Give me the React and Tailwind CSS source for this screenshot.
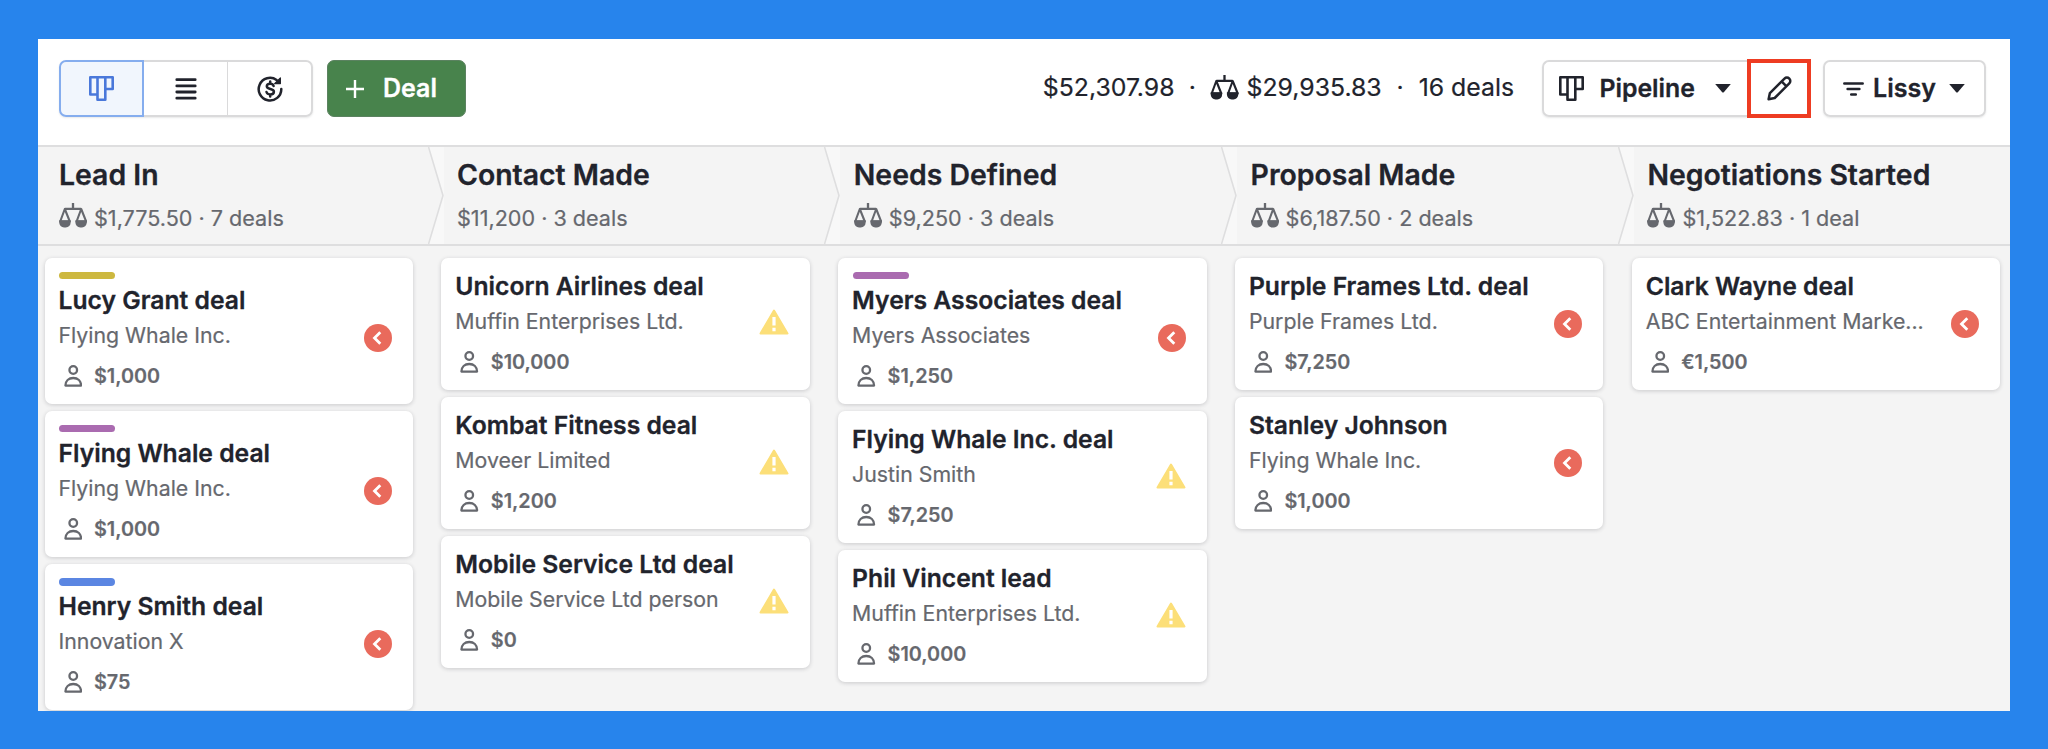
const stages = [
  {
    name: "Lead In",
    weighted: true,
    summary: "$1,775.50 · 7 deals",
    deals: [
      { title: "Lucy Grant deal", org: "Flying Whale Inc.", value: "$1,000", label: "bg-[#cdb83f]", status: "overdue" },
      { title: "Flying Whale deal", org: "Flying Whale Inc.", value: "$1,000", label: "bg-[#aa6bb0]", status: "overdue" },
      { title: "Henry Smith deal", org: "Innovation X", value: "$75", label: "bg-[#5b86e2]", status: "overdue" },
    ],
  },
  {
    name: "Contact Made",
    summary: "$11,200 · 3 deals",
    deals: [
      { title: "Unicorn Airlines deal", org: "Muffin Enterprises Ltd.", value: "$10,000", status: "warning" },
      { title: "Kombat Fitness deal", org: "Moveer Limited", value: "$1,200", status: "warning" },
      { title: "Mobile Service Ltd deal", org: "Mobile Service Ltd person", value: "$0", status: "warning" },
    ],
  },
  {
    name: "Needs Defined",
    weighted: true,
    summary: "$9,250 · 3 deals",
    deals: [
      { title: "Myers Associates deal", org: "Myers Associates", value: "$1,250", label: "bg-[#aa6bb0]", status: "overdue" },
      { title: "Flying Whale Inc. deal", org: "Justin Smith", value: "$7,250", status: "warning" },
      { title: "Phil Vincent lead", org: "Muffin Enterprises Ltd.", value: "$10,000", status: "warning" },
    ],
  },
  {
    name: "Proposal Made",
    weighted: true,
    summary: "$6,187.50 · 2 deals",
    deals: [
      { title: "Purple Frames Ltd. deal", org: "Purple Frames Ltd.", value: "$7,250", status: "overdue" },
      { title: "Stanley Johnson", org: "Flying Whale Inc.", value: "$1,000", status: "overdue" },
    ],
  },
  {
    name: "Negotiations Started",
    weighted: true,
    summary: "$1,522.83 · 1 deal",
    deals: [
      { title: "Clark Wayne deal", org: "ABC Entertainment Marke...", value: "€1,500", status: "overdue" },
    ],
  },
]

const BoardIcon = () => (
  <svg className="size-[25px] shrink-0" viewBox="0 0 25 25" fill="none" stroke="currentColor" strokeWidth="2.6" strokeLinejoin="round">
    <path d="M8.5 1.3H1.3v17.2h7.2M16.3 13h7.4V1.3h-7.4M8.5 1.3h7.8V23.7H8.5z" />
  </svg>
)

const ListIcon = () => (
  <svg className="w-[22px] h-[24px]" viewBox="0 0 22 24" stroke="currentColor" strokeWidth="2.8" strokeLinecap="round">
    <path d="M1.8 2.7h18.4M1.8 8.9h18.4M1.8 15h18.4M1.8 21.2h18.4" />
  </svg>
)

const ForecastIcon = () => (
  <svg className="size-[26px]" viewBox="0 0 26 26" fill="none" stroke="currentColor" strokeWidth="2.5" strokeLinecap="round">
    <path d="M24.3 13A11.3 11.3 0 1 1 19.6 4" />
    <path d="M23.4 2v5.6h-5.8z" fill="currentColor" strokeWidth="1.2" strokeLinejoin="round" />
    <path d="M16.6 10c-.4-1.5-1.7-2.3-3.4-2.3-2 0-3.4 1-3.4 2.6 0 3.7 7.1 1.7 7.1 5.4 0 1.7-1.5 2.7-3.6 2.7-1.9 0-3.3-.8-3.8-2.4M13.2 5.6v2M13.2 18.6v2" />
  </svg>
)

const ScalesIcon = ({ className }) => (
  <svg className={className} viewBox="0 0 28 25" fill="none" stroke="currentColor" strokeWidth="2.3" strokeLinejoin="round">
    <path d="M14 0v6.2M5.8 5.8h16.4" />
    <path d="M5.8 6 1.2 18.5h9.6zM22.2 6l-4.6 12.5h9.6z" strokeWidth="2.1" />
    <path d="M.2 17.2h11.4v2.2A4.8 4.8 0 0 1 6.8 24.4H5A4.8 4.8 0 0 1 .2 19.6zM16.4 17.2h11.4v2.4a4.8 4.8 0 0 1-4.8 4.8h-1.8a4.8 4.8 0 0 1-4.8-4.8z" fill="currentColor" stroke="none" />
  </svg>
)

const PersonIcon = () => (
  <svg className="w-[18.5px] h-[22px]" viewBox="0 0 18 22" fill="none" stroke="currentColor" strokeWidth="2.3">
    <circle cx="9" cy="5" r="3.8" />
    <path d="M1.2 20.6c0-4.6 3.3-7.6 7.8-7.6s7.8 3 7.8 7.6z" strokeLinejoin="round" />
  </svg>
)

const PencilIcon = () => (
  <svg className="size-[25px]" viewBox="0 0 25 25" fill="none" stroke="currentColor" strokeWidth="2.5" strokeLinejoin="round">
    <path d="M1.6 23.3l1.3-6.2L17.5 2.6a3.3 3.3 0 0 1 4.8 4.8L7.7 22zM14.6 5.4l4.9 4.9" />
  </svg>
)

const FilterIcon = () => (
  <svg className="w-[21px] h-[14px]" viewBox="0 0 21 14" stroke="currentColor" strokeWidth="2.5" strokeLinecap="round">
    <path d="M1.3 1.5h18.4M4.6 7h11.8M8.2 12.5h4.6" />
  </svg>
)

const Caret = () => (
  <svg className="w-[16px] h-[9px]" viewBox="0 0 16 9" fill="currentColor">
    <path d="M.2 0h15.6L8.8 8.2a1.1 1.1 0 0 1-1.6 0z" />
  </svg>
)

function Status({ type }) {
  if (type === "warning") {
    return (
      <svg className="w-[30px] h-[26px] -mt-[3px]" viewBox="0 0 30 26">
        <path d="M15 1.5 28.5 24.5h-27z" fill="#fcdf79" stroke="#fcdf79" strokeWidth="2" strokeLinejoin="round" />
        <path d="M15 8v8.5M15 18.7v3.6" stroke="#fff" strokeWidth="3.2" />
      </svg>
    )
  }
  return (
    <svg className="size-7" viewBox="0 0 28 28">
      <circle cx="14" cy="14" r="14" fill="#e96a5c" />
      <path d="m16.3 8.2-5.8 5.8 5.8 5.8" fill="none" stroke="#fff" strokeWidth="2.8" />
    </svg>
  )
}

function StageHeader({ stage, first }) {
  return (
    <div className={first ? "flex shrink-0 w-[389.5px] pl-[21px]" : "flex shrink-0 w-[396.8px]"}>
      {!first && (
        <svg className="w-4 h-full mr-[13.5px] shrink-0" viewBox="0 0 16 98" preserveAspectRatio="none">
          <path d="M0 0h16v98H0l15-49z" fill="#f8f8f8" />
          <path d="M.5 0 15 49 .5 98" fill="none" stroke="#dededf" strokeWidth="1.6" />
        </svg>
      )}
      <div className="pt-[10px] whitespace-nowrap">
        <h2 className="text-[28.4px] leading-9 font-semibold [-webkit-text-stroke:0.3px]">{stage.name}</h2>
        <div className="flex items-center mt-[11px] text-[21.6px] leading-7 text-[#66686e] [-webkit-text-stroke:0.2px]">
          {stage.weighted && <ScalesIcon className="w-7 h-[25px] mr-[7px] -mt-[5px]" />}
          {stage.summary}
        </div>
      </div>
    </div>
  )
}

function DealCard({ deal }) {
  return (
    <div className="w-[368.5px] shrink-0 rounded-[7px] bg-white shadow-[0_1px_4px_rgba(33,35,44,0.2)]">
      {deal.label && (
        <div className="h-3.5 pt-3.5 pl-[14.5px]">
          <div className={`w-14 h-[7.5px] rounded-full ${deal.label}`} />
        </div>
      )}
      <div className="flex items-center justify-between h-[132.3px] pl-[14px] pr-[21px]">
        <div className="h-full pt-[13px] whitespace-nowrap">
          <h3 className="text-[24.7px] leading-[30px] font-semibold [-webkit-text-stroke:0.3px]">{deal.title}</h3>
          <p className="mt-[5px] text-[21.3px] leading-[30px] text-[#66686e] [-webkit-text-stroke:0.2px]">{deal.org}</p>
          <div className="flex items-center mt-[14px] pl-[5px] gap-[12px] text-[19.8px] leading-6 font-semibold text-[#66686e] [-webkit-text-stroke:0.2px]">
            <PersonIcon />
            {deal.value}
          </div>
        </div>
        <Status type={deal.status} />
      </div>
    </div>
  )
}

export default function App() {
  return (
    <div className="w-[2048px] h-[749px] bg-[#2784ec] pt-[39px] px-[38px] font-['Inter',sans-serif] text-[#21232c]">
      <div className="flex flex-col h-[672px] bg-[#f4f4f4] overflow-hidden">
        <div className="flex items-start h-[106px] shrink-0 pt-[21px] pl-[21px] pr-[24px] bg-white">
          <div className="flex h-[57px] w-[254px] rounded-[7px] shadow-[0_1px_2px_rgba(33,35,44,0.1)]">
            <button className="flex w-[85px] items-center justify-center rounded-l-[7px] border-2 border-[#85adee] bg-[#f1f6fd] text-[#4a78da]">
              <BoardIcon />
            </button>
            <button className="flex w-[84px] items-center justify-center border-y-2 border-r border-[#dadadb]">
              <ListIcon />
            </button>
            <button className="flex w-[85px] items-center justify-center rounded-r-[7px] border-y-2 border-r-2 border-[#dadadb]">
              <ForecastIcon />
            </button>
          </div>
          <button className="flex h-[57px] w-[138.5px] ml-[14px] pl-[18px] items-center rounded-[7px] border border-[#5b8260] bg-[#48834c] text-white text-[25px] font-semibold [-webkit-text-stroke:0.3px]">
            <svg className="size-[18px] mr-[19px]" viewBox="0 0 18 18" stroke="currentColor" strokeWidth="2.4">
              <path d="M9 0v18M0 9h18" />
            </svg>
            Deal
          </button>

          <div className="flex items-center ml-auto h-[55px] text-[24.8px] whitespace-nowrap [-webkit-text-stroke:0.2px]">
            <span>$52,307.98</span>
            <span className="w-[35.5px] text-center">·</span>
            <ScalesIcon className="w-[29px] h-[25px] mr-[7.5px]" />
            <span>$29,935.83</span>
            <span className="w-[37px] text-center">·</span>
            <span>16 deals</span>
          </div>

          <div className="flex ml-[28px] h-[57px] text-[24.8px] font-semibold [-webkit-text-stroke:0.3px]">
            <button className="flex w-[205px] items-center pl-[15px] rounded-l-[7px] border-2 border-r-0 border-[#dadadb] shadow-[0_1px_2px_rgba(33,35,44,0.1)]">
              <BoardIcon />
              <span className="ml-[15.5px] mr-auto">Pipeline</span>
              <span className="mr-[16.5px]"><Caret /></span>
            </button>
            <button className="flex w-[64px] h-[59px] -mt-px items-center justify-center border-[4px] border-[#ee3c22]">
              <PencilIcon />
            </button>
          </div>
          <button className="flex w-[163px] h-[57px] ml-3 pl-[17.5px] pr-[19px] items-center rounded-[7px] border-2 border-[#dadadb] text-[25px] font-semibold shadow-[0_1px_2px_rgba(33,35,44,0.1)] [-webkit-text-stroke:0.3px]">
            <FilterIcon />
            <span className="ml-[9.5px] mr-auto">Lissy</span>
            <Caret />
          </button>
        </div>

        <div className="flex h-[101px] shrink-0 border-y-2 border-[#dededf]">
          {stages.map((stage, i) => (
            <StageHeader key={stage.name} stage={stage} first={i === 0} />
          ))}
        </div>

        <div className="flex pt-[11.6px] pl-[6.5px] gap-[28.3px]">
          {stages.map((stage) => (
            <div key={stage.name} className="flex flex-col shrink-0 gap-[7px]">
              {stage.deals.map((deal) => (
                <DealCard key={deal.title} deal={deal} />
              ))}
            </div>
          ))}
        </div>
      </div>
    </div>
  )
}
